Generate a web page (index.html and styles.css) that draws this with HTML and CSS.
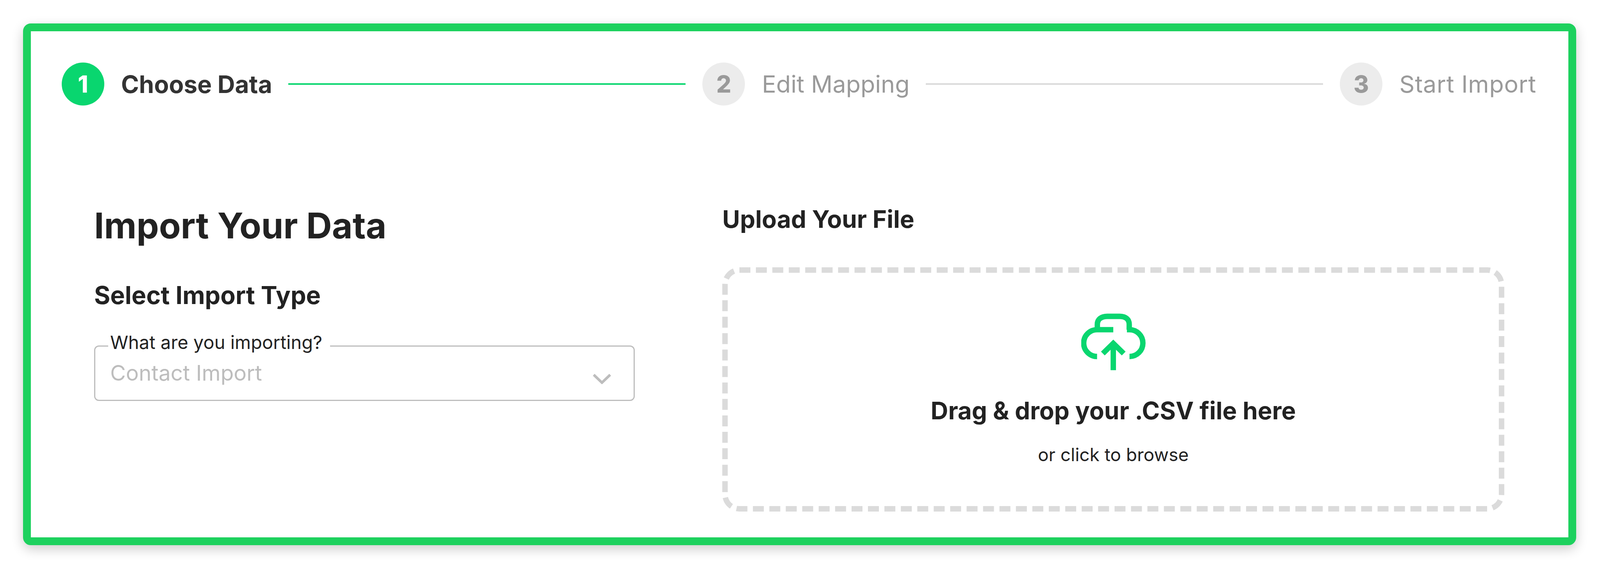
FILE: index.html
```html
<!DOCTYPE html>
<html lang="en">
<head>
    <meta charset="UTF-8">
    <meta name="viewport" content="width=device-width, initial-scale=1.0">
    <link rel="stylesheet" href="styles.css">
    <title>Import Your Data</title>
</head>
<body>
    <div class="card">
        <div class="stepper">
            <div class="step active">
                <span class="step-num">1</span>
                <span class="step-label">Choose Data</span>
            </div>
            <div class="step-line active"></div>
            <div class="step">
                <span class="step-num">2</span>
                <span class="step-label">Edit Mapping</span>
            </div>
            <div class="step-line"></div>
            <div class="step">
                <span class="step-num">3</span>
                <span class="step-label last">Start Import</span>
            </div>
        </div>
        <div class="content">
            <div class="left-col">
                <h1>Import Your Data</h1>
                <h2 class="type-title">Select Import Type</h2>
                <fieldset class="select-box">
                    <legend>What are you importing?</legend>
                    <span class="select-value">Contact Import</span>
                    <svg class="chevron" viewBox="0 0 48 28" fill="none" stroke="#bdbdbd" stroke-width="7">
                        <path d="M2 3 L24 24 L46 3"/>
                    </svg>
                </fieldset>
            </div>
            <div class="right-col">
                <h2 class="upload-title">Upload Your File</h2>
                <div class="dropzone">
                    <svg class="cloud" viewBox="0 0 167 146" fill="none" stroke="#09d66f" stroke-width="14">
                        <path d="M41 110.7 A34.67 34.67 0 0 1 41 41.3 H83"/>
                        <path d="M41.7 41.3 V27.3 C41.7 14 52 6.7 67.7 6.7 H99.3 C115 6.7 124.3 14 124.3 27.3 V41.3"/>
                        <path d="M118.3 41.3 H125 A34.67 34.67 0 0 1 125 110.7"/>
                        <path d="M83 146 V74"/>
                        <path d="M56 103 L83 76.7 L110 103"/>
                    </svg>
                    <p class="drop-title">Drag &amp; drop your .CSV file here</p>
                    <p class="drop-hint">or click to browse</p>
                </div>
            </div>
        </div>
    </div>
</body>
</html>
```

FILE: styles.css
```css
body {
    font-family: Inter, "Noto Sans", sans-serif;
    background-color: #fff;
    margin: 0;
    padding: 60px 61px 61px 59px;
}

.card {
    height: 1335px;
    box-sizing: border-box;
    border: 20px solid #1dd15e;
    border-radius: 20px;
    background-color: #fff;
    box-shadow: 0 10px 30px rgba(0, 0, 0, 0.2);
    display: flex;
    flex-direction: column;
}

.stepper {
    display: flex;
    align-items: center;
    padding: 80px 82px 0 79px;
}

.step {
    display: flex;
    align-items: center;
    gap: 43px;
}

.step-num {
    width: 109px;
    height: 110px;
    flex-shrink: 0;
    border-radius: 50%;
    background-color: #ececec;
    color: #9a9a9a;
    font-size: 60px;
    font-weight: 800;
    display: flex;
    align-items: center;
    justify-content: center;
}

.step-label {
    font-size: 61px;
    color: #9a9a9a;
}

.step-label.last {
    letter-spacing: 0.7px;
}

.step.active .step-num {
    background-color: #09d66f;
    color: #fff;
}

.step.active .step-label {
    color: #333;
    font-size: 62px;
    font-weight: 700;
}

.step-line {
    flex: 1;
    height: 4px;
    margin: 0 43px 0 41px;
    background-color: #dadada;
}

.step-line.active {
    background-color: #09d66f;
}

.content {
    flex: 1;
    display: grid;
    grid-template-columns: 1384px 1fr;
    gap: 224px;
    padding: 0 164px 62px 162px;
}

h1 {
    font-size: 91px;
    font-weight: 700;
    color: #222;
    margin: 252px 0 0;
}

h2 {
    font-size: 62px;
    font-weight: 700;
    color: #222;
    margin: 0;
}

.type-title {
    font-size: 63px;
    margin-top: 85px;
}

.select-box {
    position: relative;
    height: 175px;
    box-sizing: border-box;
    margin: 58px 0 0;
    padding: 0 38px;
    border: 3px solid #bdbdbd;
    border-radius: 12px;
    display: flex;
    align-items: flex-start;
}

legend {
    font-size: 47px;
    color: #222;
    line-height: 50px;
    margin-left: -5px;
    padding: 0 20px 18px 5px;
}

.select-value {
    font-size: 55px;
    color: #bdbdbd;
    line-height: 60px;
    margin-top: 5px;
}

/* sits over the field, on the right */
.chevron {
    position: absolute;
    right: 58px;
    top: 37px;
    width: 46px;
    height: 27px;
}

.upload-title {
    margin-top: 253px;
}

.dropzone {
    height: 625px;
    box-sizing: border-box;
    margin-top: 86px;
    border: 14px dashed #dbdbdb;
    border-radius: 44px;
    display: flex;
    flex-direction: column;
    align-items: center;
}

.cloud {
    width: 165px;
    height: 146px;
    margin-top: 104px;
}

.drop-title {
    font-size: 62px;
    font-weight: 700;
    color: #222;
    margin: 65px 0 0;
}

.drop-hint {
    font-size: 46px;
    color: #222;
    margin: 47px 0 0;
}
```
